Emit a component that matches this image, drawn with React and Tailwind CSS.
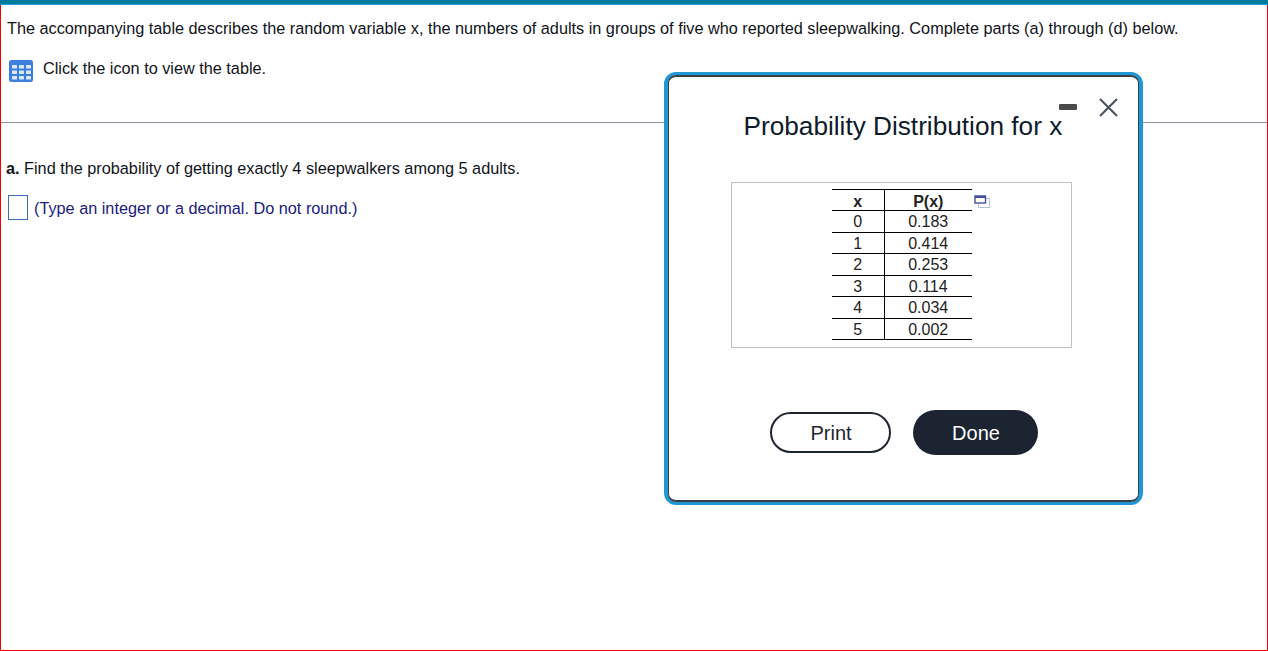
const rows = [
  ["0", "0.183", "pt-[2px]"],
  ["1", "0.414", "pt-[2px]"],
  ["2", "0.253", "pt-[2px]"],
  ["3", "0.114", "pt-[2px]"],
  ["4", "0.034", "pt-[2px]"],
  ["5", "0.002", "pt-[2px]"],
];

function GridIcon() {
  return (
    <svg width="24" height="22" viewBox="0 0 24 22" className="shrink-0">
      <rect x="0" y="0" width="24" height="22" rx="2.5" fill="#3d7fdc" />
      {[5, 10.5, 16].map((y) =>
        [3, 10, 17].map((x) => (
          <rect key={x + "-" + y} x={x} y={y} width="5" height="3.6" rx="0.5" fill="#dbe8fa" />
        ))
      )}
    </svg>
  );
}

function CopyIcon() {
  return (
    <svg width="16" height="13" viewBox="0 0 16 13" className="block">
      <path d="M11 3.5 H15.5 V12.5 H4.5 V9" fill="none" stroke="#b4bedd" strokeWidth="1" />
      <rect x="1" y="1" width="10.5" height="7" fill="#fff" stroke="#3f4f9e" strokeWidth="1.4" />
      <rect x="1" y="1" width="10.5" height="2" fill="#3f4f9e" />
    </svg>
  );
}

export default function App() {
  return (
    <div
      className="relative h-[651px] w-full bg-white text-[16.25px] text-[#10131a] border-l border-r border-b border-[#ff0000]"
      style={{ fontFamily: '"Liberation Sans", Arial, sans-serif' }}
    >
      <div className="-mx-px h-[5px] border-b border-[#2a9fd6] bg-[#007a9c]" />
      <div className="h-[118px] border-b border-[#8a929c] pl-[6px]">
        <p className="pt-[13px] leading-[20px]">
          The accompanying table describes the random variable x, the numbers of adults in groups of five who reported sleepwalking. Complete parts (a) through (d) below.
        </p>
        <div className="mt-[22px] flex items-center gap-[10px] pl-[2px]">
          <GridIcon />
          <span className="leading-[20px] -translate-y-[3px]">Click the icon to view the table.</span>
        </div>
      </div>
      <div className="pl-[5px]">
        <p className="pt-[35px] leading-[20px]">
          <b>a.</b> Find the probability of getting exactly 4 sleepwalkers among 5 adults.
        </p>
        <div className="mt-[17px] flex items-center gap-[6px] pl-[2px]">
          <div className="h-[25px] w-[20px] border border-[#3a6fc0] bg-white" />
          <span className="leading-[20px] text-[#1a1a80]">(Type an integer or a decimal. Do not round.)</span>
        </div>
      </div>

      <div className="absolute left-[663px] top-[72px] h-[433px] w-[479px] rounded-[12px] border-x-[4px] border-y-[3px] border-[#1f97d4] bg-white">
        <div className="relative flex h-full flex-col rounded-[8px] border-x-[1.5px] border-y-[2px] border-[#3a3f45]">
          <button className="absolute left-[389.5px] top-[27px] h-[6px] w-[18px] rounded-[1px] bg-[#4a4a4a]" aria-label="Minimize" />
          <button className="absolute left-[429.5px] top-[21px]" aria-label="Close">
            <svg width="19" height="19" viewBox="0 0 19 19" className="block">
              <path d="M1 1 L18 18 M18 1 L1 18" stroke="#46505c" strokeWidth="2" fill="none" />
            </svg>
          </button>
          <h2 className="pl-[74.5px] pt-[31px] text-[26.2px] font-normal leading-[36px] text-[#0e1a2b]">
            Probability Distribution for x
          </h2>
          <div className="relative ml-[61.5px] mt-[38px] flex h-[166px] w-[341px] justify-center border border-[#c0c0c0] pl-[2px] pt-[6px]">
            <table className="h-[151px] w-[140px] border-collapse text-[16px] leading-none text-[#222]">
              <thead>
                <tr className="border-y border-black">
                  <th className="h-[21px] w-[52px] border-r border-black pt-[3px] text-center font-bold">x</th>
                  <th className="pt-[3px] text-center font-bold">P(x)</th>
                </tr>
              </thead>
              <tbody>
                {rows.map(([x, p, pad]) => (
                  <tr key={x} className="border-b border-black">
                    <td className={"h-[21.5px] border-r border-black text-center " + pad}>{x}</td>
                    <td className={"text-center " + pad}>{p}</td>
                  </tr>
                ))}
              </tbody>
            </table>
            <div className="absolute left-[242px] top-[12px]">
              <CopyIcon />
            </div>
          </div>
          <div className="ml-[100.5px] mt-[62px] flex items-center gap-[22px]">
            <button className="h-[41px] w-[121px] rounded-full border-[2px] border-[#1e2430] bg-white pl-[2px] text-[20px] text-[#1e2430]">
              Print
            </button>
            <button className="h-[45px] w-[125px] rounded-full bg-[#1c2431] pl-[2px] text-[20px] text-white">
              Done
            </button>
          </div>
        </div>
      </div>
    </div>
  );
}
